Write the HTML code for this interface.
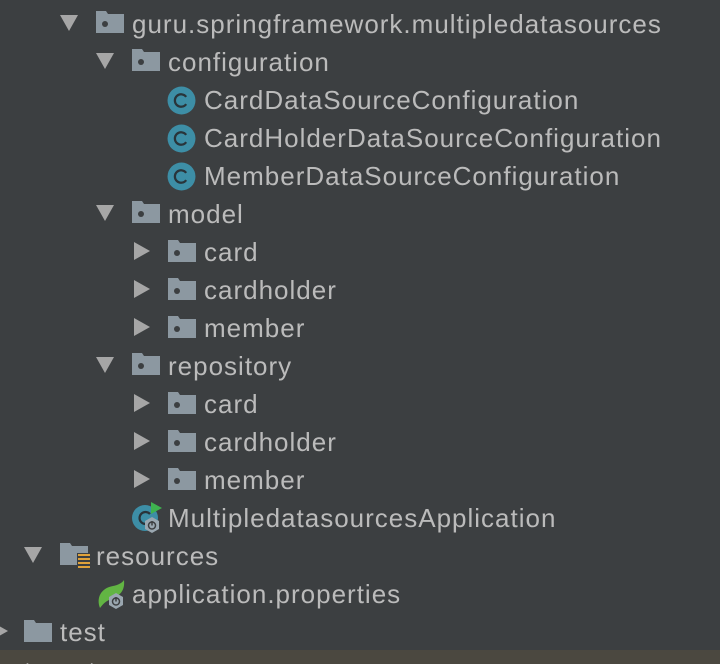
<!DOCTYPE html>
<html style="overflow:hidden;height:664px"><head><meta charset="utf-8"><style>
html,body{margin:0;width:720px;height:664px;overflow:hidden;}
body{background:#3c3f41;position:relative;font-family:"Liberation Sans",sans-serif;}
.r{position:absolute;height:38px;line-height:38px;font-size:26px;letter-spacing:1px;color:#bbbbbb;white-space:nowrap;}
svg{position:absolute;}
.bot{position:absolute;left:0;top:650px;width:720px;height:14px;background:#4b4840;}
</style></head><body>
<svg width="0" height="0" style="position:absolute"><defs>
<symbol id="fo" viewBox="0 0 28 22"><path d="M0 0H10L12 3H28V22H0Z" fill="#8c98a1"/><circle cx="9" cy="13" r="3" fill="#3c3f41"/></symbol>
<symbol id="fp" viewBox="0 0 28 22"><path d="M0 0H10L12 3H28V22H0Z" fill="#8c98a1"/></symbol>
<symbol id="dn" viewBox="0 0 18 16"><path d="M0 0H18L9 16Z" fill="#a6a6a6"/></symbol>
<symbol id="rt" viewBox="0 0 16 18"><path d="M0 0L16 9L0 18Z" fill="#a6a6a6"/></symbol>
<symbol id="cl" viewBox="0 0 28 28"><circle cx="14" cy="14" r="13.5" fill="#3d8ea6"/><path d="M18.5 10.5A6 6 0 1 0 18.5 17.5" stroke="#29343a" stroke-width="2.2" fill="none"/></symbol>
</defs></svg>

<svg style="left:60px;top:15px" width="18" height="16"><use href="#dn"/></svg>
<svg style="left:96px;top:11px" width="28" height="22"><use href="#fo"/></svg>
<div class="r" style="left:132px;top:5px">guru.springframework.multipledatasources</div>

<svg style="left:96px;top:53px" width="18" height="16"><use href="#dn"/></svg>
<svg style="left:132px;top:49px" width="28" height="22"><use href="#fo"/></svg>
<div class="r" style="left:168px;top:43px">configuration</div>
<svg style="left:167px;top:86px" width="29" height="29"><use href="#cl"/></svg>
<div class="r" style="left:204px;top:81px">CardDataSourceConfiguration</div>
<svg style="left:167px;top:124px" width="29" height="29"><use href="#cl"/></svg>
<div class="r" style="left:204px;top:119px">CardHolderDataSourceConfiguration</div>
<svg style="left:167px;top:162px" width="29" height="29"><use href="#cl"/></svg>
<div class="r" style="left:204px;top:157px">MemberDataSourceConfiguration</div>

<svg style="left:96px;top:205px" width="18" height="16"><use href="#dn"/></svg>
<svg style="left:132px;top:201px" width="28" height="22"><use href="#fo"/></svg>
<div class="r" style="left:168px;top:195px">model</div>
<svg style="left:134px;top:242px" width="16" height="18"><use href="#rt"/></svg>
<svg style="left:168px;top:240px" width="28" height="22"><use href="#fo"/></svg>
<div class="r" style="left:204px;top:233px">card</div>
<svg style="left:134px;top:280px" width="16" height="18"><use href="#rt"/></svg>
<svg style="left:168px;top:278px" width="28" height="22"><use href="#fo"/></svg>
<div class="r" style="left:204px;top:271px">cardholder</div>
<svg style="left:134px;top:318px" width="16" height="18"><use href="#rt"/></svg>
<svg style="left:168px;top:316px" width="28" height="22"><use href="#fo"/></svg>
<div class="r" style="left:204px;top:309px">member</div>

<svg style="left:96px;top:357px" width="18" height="16"><use href="#dn"/></svg>
<svg style="left:132px;top:353px" width="28" height="22"><use href="#fo"/></svg>
<div class="r" style="left:168px;top:347px">repository</div>
<svg style="left:134px;top:394px" width="16" height="18"><use href="#rt"/></svg>
<svg style="left:168px;top:392px" width="28" height="22"><use href="#fo"/></svg>
<div class="r" style="left:204px;top:385px">card</div>
<svg style="left:134px;top:432px" width="16" height="18"><use href="#rt"/></svg>
<svg style="left:168px;top:430px" width="28" height="22"><use href="#fo"/></svg>
<div class="r" style="left:204px;top:423px">cardholder</div>
<svg style="left:134px;top:470px" width="16" height="18"><use href="#rt"/></svg>
<svg style="left:168px;top:468px" width="28" height="22"><use href="#fo"/></svg>
<div class="r" style="left:204px;top:461px">member</div>

<svg style="left:131px;top:502px" width="34" height="34" viewBox="0 0 34 34">
<circle cx="14" cy="16" r="13" fill="#3d8ea6"/><path d="M19 12A6 6 0 1 0 19 20" stroke="#29343a" stroke-width="2.2" fill="none"/>
<path d="M20 0L31 6L20 12Z" fill="#3fb34f"/>
<path d="M21 15L28 19V27L21 31L14 27V19Z" fill="#9aa7b0"/>
<circle cx="21" cy="23.5" r="3.5" stroke="#3c3f41" stroke-width="1.5" fill="none"/><path d="M21 19V23.5" stroke="#3c3f41" stroke-width="1.5"/>
</svg>
<div class="r" style="left:168px;top:499px">MultipledatasourcesApplication</div>

<svg style="left:24px;top:547px" width="18" height="16"><use href="#dn"/></svg>
<svg style="left:60px;top:543px" width="30" height="28" viewBox="0 0 30 28"><path d="M0 0H10L12 3H28V22H0Z" fill="#8c98a1"/><rect x="17" y="10" width="13" height="18" fill="#3c3f41"/><g fill="#e0a23a"><rect x="18" y="11" width="12" height="2"/><rect x="18" y="15" width="12" height="2"/><rect x="18" y="19" width="12" height="2"/><rect x="18" y="23" width="12" height="2"/></g></svg>
<div class="r" style="left:96px;top:537px">resources</div>

<svg style="left:95px;top:580px" width="34" height="32" viewBox="0 0 34 32">
<path d="M29 0C30 10 26 16 14 20C10 22 8 24 5 28C1 18 6 8 18 6C23 5 27 3 29 0Z" fill="#62b543"/>
<path d="M21 13L28 17V25L21 29L14 25V17Z" fill="#9aa7b0"/>
<circle cx="21" cy="21.5" r="3.5" stroke="#3c3f41" stroke-width="1.5" fill="none"/><path d="M21 17V21.5" stroke="#3c3f41" stroke-width="1.5"/>
</svg>
<div class="r" style="left:132px;top:575px">application.properties</div>

<svg style="left:-8px;top:622px" width="16" height="18"><use href="#rt"/></svg>
<svg style="left:24px;top:620px" width="28" height="22"><use href="#fp"/></svg>
<div class="r" style="left:60px;top:613px">test</div>
<div class="bot"></div>
<div class="r" style="left:24px;top:652px">target</div>
</body></html>
